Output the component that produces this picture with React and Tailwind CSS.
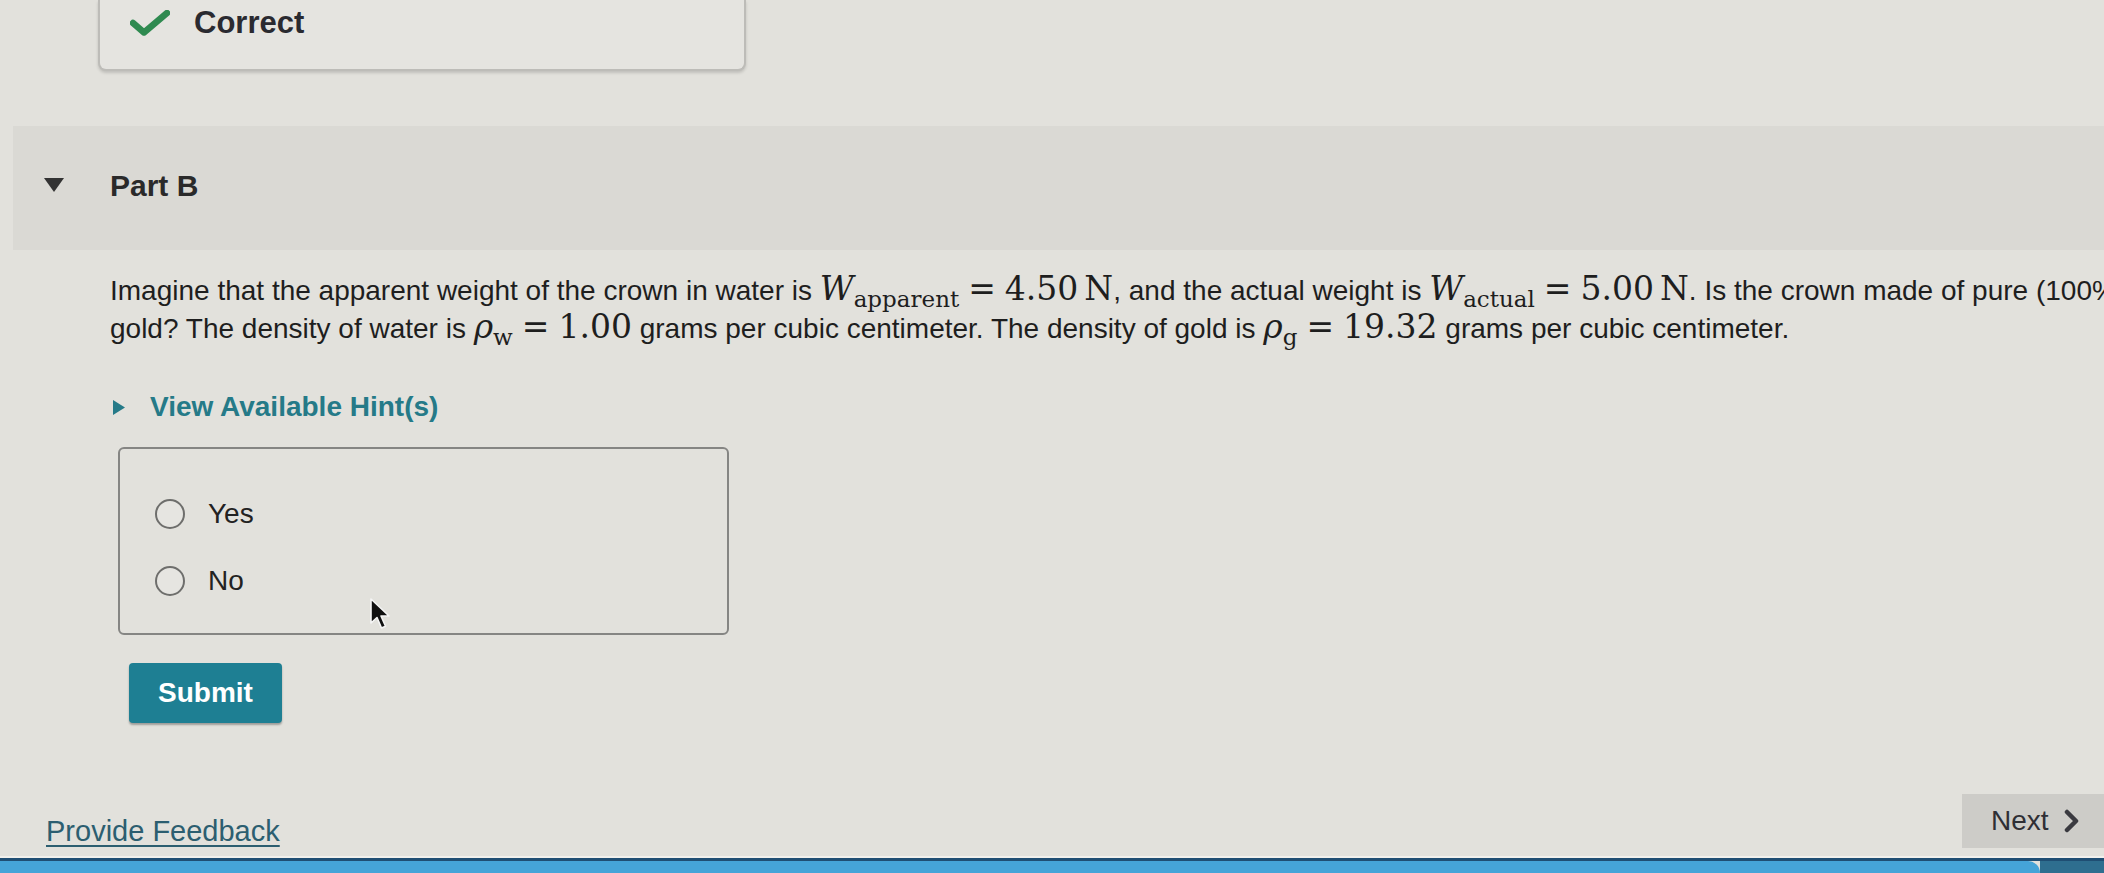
import React from 'react';

// inline math pieces, KaTeX-ish look
const Sym = ({ children }) => (
  <span className="font-['DejaVu_Serif',serif] italic text-[33px]">{children}</span>
);
const Sub = ({ children }) => (
  <span className="font-['DejaVu_Serif',serif] text-[23px] align-[-7px]">{children}</span>
);
const Eq = () => (
  <span className="font-['DejaVu_Serif',serif] text-[33px] mx-[9px]">=</span>
);
const Num = ({ children }) => (
  <span className="font-['DejaVu_Serif',serif] text-[33px]">{children}</span>
);

function Radio({ label }) {
  return (
    <label className="flex items-center h-[44px] gap-[23px] cursor-pointer">
      <span className="w-[30px] h-[30px] rounded-full border-2 border-[#6e6e6c] bg-[#e6e5e1]"></span>
      <span className="text-[28px] text-[#222]">{label}</span>
    </label>
  );
}

export default function App() {
  return (
    <div className="w-[2104px] h-[873px] overflow-hidden bg-[#e2e1dc] flex flex-col font-['Liberation_Sans',Arial,sans-serif] text-[#1e1e1e]">
      {/* previous part result */}
      <div className="ml-[98px] w-[648px] h-[71px] shrink-0 border-2 border-t-0 border-[#bdbcb8] rounded-b-lg bg-[#e5e4e0] shadow-[0_2px_3px_rgba(0,0,0,0.15)]">
        <div className="flex items-center h-[46px] pl-[30px] gap-[24px]">
          <svg width="40" height="26" viewBox="0 0 40 26">
            <path d="M3 13 L14 22.5 L37 3" fill="none" stroke="#2f8a50" strokeWidth="6.5" strokeLinecap="round" strokeLinejoin="round" />
          </svg>
          <span className="text-[31px] font-bold text-[#2a2a30]">Correct</span>
        </div>
      </div>

      {/* Part B header */}
      <div className="ml-[13px] mt-[55px] h-[124px] shrink-0 bg-[#dad9d4] flex items-center pb-[6px]">
        <svg className="ml-[31px]" width="20" height="14" viewBox="0 0 20 14">
          <path d="M0 0 H20 L10 14 Z" fill="#333" />
        </svg>
        <span className="ml-[46px] text-[30px] font-bold text-[#2a2a2a]">Part B</span>
      </div>

      {/* question text */}
      <div className="ml-[110px] mt-[20px] text-[28px] leading-[38px]">
        <div className="h-[38px] whitespace-nowrap">
          Imagine that the apparent weight of the crown in water is <Sym>W</Sym><Sub>apparent</Sub><Eq /><Num>4.50<span className="ml-[6px]">N</span></Num>, and the actual weight is <Sym>W</Sym><Sub>actual</Sub><Eq /><Num>5.00<span className="ml-[6px]">N</span></Num>. Is the crown made of pure (100%)
        </div>
        <div className="h-[38px] whitespace-nowrap">
          gold? The density of water is <Sym>ρ</Sym><Sub>w</Sub><Eq /><Num>1.00</Num> grams per cubic centimeter. The density of gold is <Sym>ρ</Sym><Sub>g</Sub><Eq /><Num>19.32</Num> grams per cubic centimeter.
        </div>
      </div>

      {/* hints */}
      <div className="ml-[113px] mt-[42px] h-[38px] flex items-center gap-[25px]">
        <svg width="12" height="15" viewBox="0 0 12 15">
          <path d="M0 0 L12 7.5 L0 15 Z" fill="#257a88" />
        </svg>
        <span className="text-[28px] font-bold text-[#257a88]">View Available Hint(s)</span>
      </div>

      {/* answer choices */}
      <div className="relative ml-[118px] mt-[21px] w-[611px] h-[188px] shrink-0 border-2 border-[#858583] rounded-md pl-[35px] pt-[43px] flex flex-col gap-[23px]">
        <Radio label="Yes" />
        <Radio label="No" />
        <svg className="absolute left-[249px] top-[148px]" width="24" height="34" viewBox="0 0 24 34">
          <path d="M2 2 L2 26 L8 20.5 L12.5 31 L16.5 29.3 L12 19 L20 19 Z" fill="#111" stroke="#f5f5f5" strokeWidth="1.6" strokeLinejoin="round" />
        </svg>
      </div>

      <button className="ml-[129px] mt-[28px] w-[153px] h-[60px] shrink-0 bg-[#1e7f93] rounded-sm shadow-[0_2px_2px_rgba(0,0,0,0.3)] text-white text-[28px] font-bold">
        Submit
      </button>

      {/* footer */}
      <div className="mt-[71px] flex justify-between items-start">
        <a href="#" className="ml-[46px] mt-[18px] leading-[38px] text-[29px] text-[#2c5e70] underline underline-offset-4 decoration-2">
          Provide Feedback
        </a>
        <div className="w-[142px] h-[54px] bg-[#cdccc8] flex items-center pl-[29px]">
          <span className="text-[28px] text-[#2f2f35]">Next</span>
          <svg className="ml-[14px]" width="17" height="24" viewBox="0 0 17 24">
            <path d="M4 3 L13 12 L4 21" fill="none" stroke="#3a3a40" strokeWidth="4.5" strokeLinecap="round" strokeLinejoin="round" />
          </svg>
        </div>
      </div>

      {/* screen edge / dock */}
      <div className="mt-auto shrink-0">
        <div className="h-[2px] bg-[#f1f0ec]"></div>
        <div className="h-[3px] bg-[#1f4e73]"></div>
        <div className="h-[12px] flex">
          <div className="flex-1 bg-[#45a4d8] rounded-tr-xl"></div>
          <div className="w-[64px] bg-[#2e6e8f]"></div>
        </div>
      </div>
    </div>
  );
}
